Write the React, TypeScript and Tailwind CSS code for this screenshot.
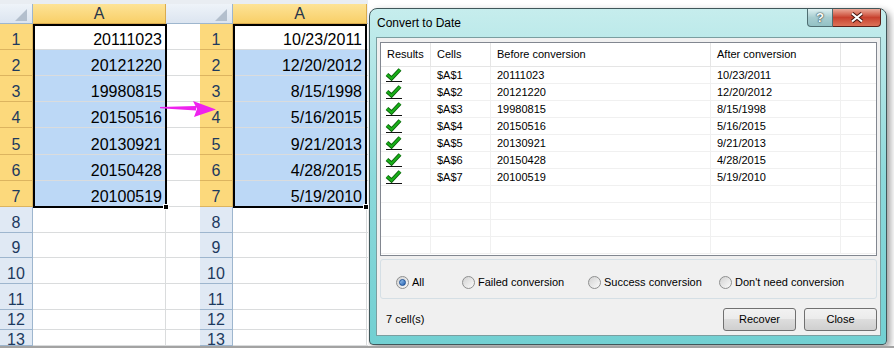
import React from "react";

const LEFT_VALUES = ["20111023", "20121220", "19980815", "20150516", "20130921", "20150428", "20100519"];
const RIGHT_VALUES = ["10/23/2011", "12/20/2012", "8/15/1998", "5/16/2015", "9/21/2013", "4/28/2015", "5/19/2010"];

const ROW_HEIGHTS = [
  "h-[26px]", "h-[26px]", "h-[26px]", "h-[26px]", "h-[27px]", "h-[26px]", "h-[26px]",
  "h-[26px]", "h-[25px]", "h-[26px]", "h-[26px]", "h-[20px]", "h-[16px]",
];

const RESULTS = LEFT_VALUES.map((v, i) => ({ cell: `$A$${i + 1}`, before: v, after: RIGHT_VALUES[i] }));

function Sheet({ values, colA, rest, pad, selW }: { values: string[]; colA: string; rest: string; pad: string; selW: string }) {
  return (
    <div className="relative flex h-[346px] flex-col font-['Liberation_Sans',Arial,sans-serif]">
      <div className="h-[4px] bg-[#e9edf2]" />
      <div className="flex h-[20px]">
        <div className="relative w-[33px] border-r border-b border-[#9eb6ce] bg-gradient-to-b from-[#eef3f9] to-[#dce5f0]">
          <div className="absolute right-[5px] bottom-[2px] h-0 w-0 border-l-[12px] border-b-[12px] border-l-transparent border-b-[#b3bfcd]" />
        </div>
        <div className={`flex ${colA} items-center justify-center border-r border-b border-[#d9ab4f] bg-gradient-to-b from-[#fde396] to-[#f8cf67] text-[16px] leading-[18px] text-[#27354a]`}>
          A
        </div>
        <div className={`${rest} border-b border-[#9eb6ce] bg-gradient-to-b from-[#eef3f9] to-[#dce5f0]`} />
      </div>
      {ROW_HEIGHTS.map((h, i) => {
        const sel = i < 7;
        const align = i === 12 ? "items-start pt-[1px]" : "items-end";
        return (
          <div key={i} className={`flex ${h}`}>
            <div
              className={`flex w-[33px] justify-center overflow-hidden border-r border-b text-[16px] leading-[18px] text-[#1d3a5e] ${align} ${
                sel ? "border-[#dcb45f] bg-[#fcd97c]" : "border-[#9eb6ce] bg-[#e0e9f4]"
              }`}
            >
              {i + 1}
            </div>
            <div
              className={`flex ${colA} justify-end overflow-hidden border-r border-b border-[#dadcdd] text-[16px] leading-[18px] text-black ${align} ${pad} ${
                i > 0 && sel ? "bg-[#bcd8f6]" : "bg-white"
              }`}
            >
              {values[i] ?? ""}
            </div>
            <div className={`${rest} border-b border-[#dadcdd] bg-white`} />
          </div>
        );
      })}
      <div className={`pointer-events-none absolute top-[24px] left-[33px] h-[184px] ${selW} border-2 border-black`}>
        <div className="absolute -right-[4px] -bottom-[4px] h-[6px] w-[6px] border border-white bg-black" />
      </div>
    </div>
  );
}

function Check() {
  return (
    <svg width="17" height="14" viewBox="0 0 17 14">
      <path d="M2 6.5 L6.5 10.5 L15 1.5" fill="none" stroke="#0b5e0b" strokeWidth="4" />
      <path d="M2 6.5 L6.5 10.5 L15 1.5" fill="none" stroke="#19b019" strokeWidth="2.2" />
      <line x1="1" y1="13.5" x2="17" y2="13.5" stroke="#111" strokeWidth="1" />
    </svg>
  );
}

function Radio({ label, checked, w }: { label: string; checked?: boolean; w: string }) {
  return (
    <div className={`flex items-center ${w}`}>
      <span className="flex h-[13px] w-[13px] items-center justify-center rounded-full border border-[#8e8f8f] bg-gradient-to-br from-[#d2d2d2] to-[#fbfbfb]">
        {checked && <span className="h-[7px] w-[7px] rounded-full border border-[#1b4f94] bg-gradient-to-br from-[#9cc8f2] to-[#2460b0]" />}
      </span>
      <span className="ml-[3px]">{label}</span>
    </div>
  );
}

function Dialog() {
  return (
    <div className="mt-[8px] ml-[1px] flex h-[337px] w-[518px] flex-col rounded-t-[8px] rounded-b-[4px] border border-[#40575a] bg-gradient-to-b from-[#c6eded] via-[#8cd9db] to-[#72d0d2] px-[6px] pr-[5px] pb-[8px] shadow-[3px_3px_7px_rgba(0,0,0,0.4)] font-['Liberation_Sans',Arial,sans-serif] text-[11px] text-black">
      <div className="flex h-[28px] items-start">
        <span className="mt-[6px] ml-[1px] text-[12px] leading-[16px]">Convert to Date</span>
        <div className="ml-auto flex">
          <div className="flex h-[18px] w-[26px] items-center justify-center rounded-bl-[4px] border border-t-0 border-[#4f6e72] bg-gradient-to-b from-[#def1f2] via-[#a7cdd0] to-[#93c1c5] text-[13px] font-bold leading-none text-white [text-shadow:0_0_2px_#1f3538,0_0_1px_#1f3538]">
            ?
          </div>
          <div className="flex h-[18px] w-[48px] items-center justify-center rounded-br-[4px] border border-t-0 border-l-0 border-[#5a1f18] bg-gradient-to-b from-[#eaa898] via-[#c8412e] to-[#dc7258]">
            <svg width="16" height="11" viewBox="0 0 16 11">
              <path d="M3 1.5 L13 9.5 M13 1.5 L3 9.5" stroke="#43150f" strokeWidth="4" />
              <path d="M3 1.5 L13 9.5 M13 1.5 L3 9.5" stroke="#fff" strokeWidth="2.2" />
            </svg>
          </div>
        </div>
      </div>
      <div className="flex flex-1 flex-col border border-[#7a9ea0] bg-[#f0f0f0] px-[3px] pt-[4px] pb-[4px]">
        <div className="h-[214px] overflow-hidden border border-[#828790] bg-white">
          <div className="flex h-[24px] border-b border-[#e5e5e5]">
            <div className="flex w-[50px] items-center border-r border-[#e5e5e5] pl-[6px]">Results</div>
            <div className="flex w-[60px] items-center border-r border-[#e5e5e5] pl-[6px]">Cells</div>
            <div className="flex w-[220px] items-center border-r border-[#e5e5e5] pl-[6px]">Before conversion</div>
            <div className="flex w-[130px] items-center border-r border-[#e5e5e5] pl-[6px]">After conversion</div>
            <div className="flex-1" />
          </div>
          {Array.from({ length: 11 }).map((_, i) => {
            const r = RESULTS[i];
            return (
              <div key={i} className="flex h-[17px] shrink-0 border-b border-[#f0f0f0]">
                <div className="flex w-[50px] items-center border-r border-[#f0f0f0] pl-[4px]">{r && <Check />}</div>
                <div className="flex w-[60px] items-center border-r border-[#f0f0f0] pl-[6px]">{r?.cell}</div>
                <div className="flex w-[220px] items-center border-r border-[#f0f0f0] pl-[6px]">{r?.before}</div>
                <div className="flex w-[130px] items-center border-r border-[#f0f0f0] pl-[6px]">{r?.after}</div>
                <div className="flex-1" />
              </div>
            );
          })}
        </div>
        <div className="mt-[3px] flex h-[40px] items-center rounded-[3px] border border-[#d5dfe5] pt-[6px] pl-[15px]">
          <Radio label="All" checked w="w-[66px]" />
          <Radio label="Failed conversion" w="w-[126px]" />
          <Radio label="Success conversion" w="w-[131px]" />
          <Radio label="Don't need conversion" w="w-[140px]" />
        </div>
        <div className="mt-[9px] flex h-[23px] items-center pl-[6px]">
          <span>7 cell(s)</span>
          <div className="ml-auto flex gap-[8px]">
            <button className="h-[23px] w-[73px] rounded-[3px] border border-[#707070] bg-[linear-gradient(#f2f2f2,#ebebeb_50%,#dddddd_50%,#cfcfcf)] text-[11px]">
              Recover
            </button>
            <button className="h-[23px] w-[73px] rounded-[3px] border border-[#707070] bg-[linear-gradient(#f2f2f2,#ebebeb_50%,#dddddd_50%,#cfcfcf)] text-[11px]">
              Close
            </button>
          </div>
        </div>
      </div>
    </div>
  );
}

export default function App() {
  return (
    <div className="relative flex h-[348px] w-[894px] flex-col overflow-hidden bg-white">
      <div className="flex h-[346px] items-start">
        <Sheet values={LEFT_VALUES} colA="w-[133px]" rest="w-[34px]" pad="pr-[3px]" selW="w-[134px]" />
        <Sheet values={RIGHT_VALUES} colA="w-[134px]" rest="w-[1px]" pad="pr-[4px]" selW="w-[134px]" />
        <Dialog />
      </div>
      <div className="h-[2px] bg-[#a3a3a3]" />
      <svg className="pointer-events-none absolute top-[96px] left-[155px]" width="70" height="26" viewBox="0 0 70 26">
        <polygon points="5,11 41,10 41,14.5 5,12.2" fill="#ee22ee" />
        <polygon points="38,5 61,13.5 39,21 42,13" fill="#ee22ee" />
      </svg>
    </div>
  );
}
